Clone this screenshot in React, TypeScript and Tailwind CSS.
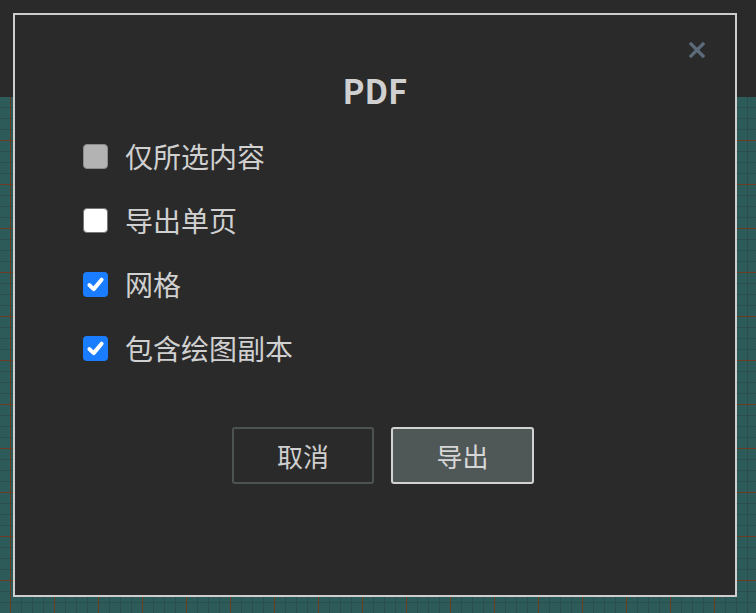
import React from "react";

function Box({ state }: { state: "disabled" | "off" | "on" }) {
  if (state === "on") {
    return (
      <div className="w-[25px] h-[25px] rounded-[4px] bg-[#1a7cff] flex items-center justify-center shrink-0">
        <svg width="21" height="21" viewBox="0 0 20 20" fill="none">
          <path d="M4.2 10.6 L8.3 14.4 L15.8 5.4" stroke="#ffffff" strokeWidth="3.8" strokeLinecap="round" strokeLinejoin="round" />
        </svg>
      </div>
    );
  }
  if (state === "disabled") {
    return <div className="w-[25px] h-[25px] rounded-[4px] bg-[#b3b3b3] border-[1.5px] border-[#8c8c8c] shrink-0" />;
  }
  return <div className="w-[25px] h-[25px] rounded-[4px] bg-white border-[1.5px] border-[#777777] shrink-0" />;
}

function Row({ state, label }: { state: "disabled" | "off" | "on"; label: string }) {
  return (
    <div className="h-[64px] flex items-center gap-[17px] pl-[68px]">
      <Box state={state} />
      <span className="text-[28px] leading-none text-[#d0d0d0]">{label}</span>
    </div>
  );
}

export default function App() {
  return (
    <div
      className="relative w-[756px] h-[613px] overflow-hidden bg-[#2a2a2a] flex flex-col"
      style={{ fontFamily: '"Noto Sans", "Noto Sans CJK SC", sans-serif' }}
    >
      <div className="h-[97px] shrink-0 bg-[#2a2a2a]" />
      <div className="flex-1 bg-[#2d5b5a] bg-[linear-gradient(to_right,#6b3b22_1px,transparent_1px),linear-gradient(to_bottom,#6b3b22_1px,transparent_1px),linear-gradient(to_right,#2a4e4e_1px,transparent_1px),linear-gradient(to_bottom,#2a4e4e_1px,transparent_1px)] bg-[size:44px_44px,44px_44px,11px_11px,11px_11px] bg-[position:10px_43px,10px_43px,10px_10px,10px_10px]" />

      <div className="absolute left-[13px] top-[13px] w-[724px] h-[584px] border-2 border-[#cdcdcd] bg-[#2a2a2a] flex flex-col">
        <button className="absolute right-[28px] top-[25px] w-[20px] h-[20px] flex items-center justify-center">
          <svg width="18" height="18" viewBox="0 0 18 18">
            <path d="M3 3 L15 15 M15 3 L3 15" stroke="#5c6b7a" strokeWidth="3.2" strokeLinecap="square" />
          </svg>
        </button>

        <div
          className="pt-[55px] h-[95px] text-center text-[33px] leading-[40px] font-bold text-[#d0d0d0]"
          style={{ fontFamily: '"Noto Sans CJK SC", sans-serif' }}
        >
          PDF
        </div>

        <div className="mt-[14px] flex flex-col" style={{ fontFamily: '"Noto Sans CJK SC", sans-serif' }}>
          <Row state="disabled" label="仅所选内容" />
          <Row state="off" label="导出单页" />
          <Row state="on" label="网格" />
          <Row state="on" label="包含绘图副本" />
        </div>

        <div
          className="mt-[47px] flex justify-center gap-[17px] pl-[16px]"
          style={{ fontFamily: '"Noto Sans CJK SC", sans-serif' }}
        >
          <button className="w-[142px] h-[57px] rounded-[3px] border-2 border-[#4d5353] text-[26px] text-[#cfcfcf] flex items-center justify-center">
            取消
          </button>
          <button className="w-[143px] h-[57px] rounded-[3px] border-2 border-[#d2d2d2] bg-[#505757] text-[26px] text-[#d6d6d6] flex items-center justify-center">
            导出
          </button>
        </div>
      </div>
    </div>
  );
}
